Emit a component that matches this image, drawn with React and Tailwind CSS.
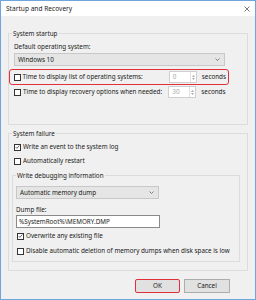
import React from "react";

const Check = ({ checked }) => (
  <div className="w-[7px] h-[7px] shrink-0 border border-[#333] bg-white flex items-center justify-center">
    {checked && (
      <svg width="6" height="6" viewBox="0 0 6 6">
        <path d="M0.8 3.1 L2.3 4.6 L5.2 1.2" fill="none" stroke="#333" strokeWidth="0.9" />
      </svg>
    )}
  </div>
);

const Chevron = () => (
  <svg width="5" height="3" viewBox="0 0 5 3" className="shrink-0">
    <path d="M0.5 0.5 L2.5 2.5 L4.5 0.5" fill="none" stroke="#555" strokeWidth="0.7" />
  </svg>
);

const Spinner = ({ value }) => (
  <div className="w-[28px] h-[12px] border border-[#cfcfcf] bg-white flex items-center shrink-0">
    <span className="flex-1 pl-[3px] text-[#a8a8a8]">{value}</span>
    <div className="w-[6px] h-full border-l border-[#e2e2e2] flex flex-col items-center justify-center gap-[1px]">
      <svg width="3" height="2" viewBox="0 0 3 2">
        <path d="M0 2 L1.5 0 L3 2 Z" fill="#aaa" />
      </svg>
      <svg width="3" height="2" viewBox="0 0 3 2">
        <path d="M0 0 L1.5 2 L3 0 Z" fill="#aaa" />
      </svg>
    </div>
  </div>
);

const Legend = ({ children }) => (
  <span className="block w-fit -mt-[5px] ml-[3px] px-[1px] h-[9px] leading-[9px] bg-[#f0f0f0]">
    {children}
  </span>
);

const Row = ({ checked, label }) => (
  <div className="flex items-center gap-[2px] h-[10px]">
    <Check checked={checked} />
    <span className="leading-[10px]">{label}</span>
  </div>
);

export default function App() {
  return (
    <div className="w-[256px] h-[300px] border border-[#6ea5dc] bg-[#f0f0f0] flex flex-col text-[6.3px] text-[#1a1a1a] font-['Noto_Sans','Open_Sans',sans-serif] overflow-hidden">
      <div className="h-[15px] bg-white flex items-center justify-between pl-[5px] pr-[5px] shrink-0">
        <span className="text-[6.6px]">Startup and Recovery</span>
        <svg width="6" height="6" viewBox="0 0 6 6">
          <path d="M0.5 0.5 L5.5 5.5 M5.5 0.5 L0.5 5.5" stroke="#444" strokeWidth="0.7" />
        </svg>
      </div>

      <div className="flex flex-col px-[7px]">
        {/* System startup */}
        <div className="mt-[17px] h-[92px] border border-[#dcdcdc]">
          <Legend>System startup</Legend>
          <div className="pl-[5px] mt-[4px] h-[9px] leading-[9px]">Default operating system:</div>
          <div className="ml-[5px] mt-[2px] w-[211px] h-[13px] border border-[#c8c8c8] bg-[#e5e5e5] flex items-center justify-between pl-[3px] pr-[4px]">
            <span>Windows 10</span>
            <Chevron />
          </div>
          <div className="mt-[3px] w-[220px] h-[16px] border-[1.5px] border-[#e0303a] rounded-[3px] flex items-center pl-[3.5px]">
            <Row checked={false} label="Time to display list of operating systems:" />
            <div className="flex-1" />
            <Spinner value="0" />
            <span className="ml-[5px] mr-[2px]">seconds</span>
          </div>
          <div className="mt-[1px] w-[220px] h-[12px] flex items-center pl-[5px]">
            <Row checked={false} label="Time to display recovery options when needed:" />
            <div className="flex-1" />
            <Spinner value="30" />
            <span className="ml-[5px] mr-[3.5px]">seconds</span>
          </div>
        </div>

        {/* System failure */}
        <div className="mt-[8px] h-[138px] border border-[#dcdcdc] flex flex-col">
          <Legend>System failure</Legend>
          <div className="pl-[5px] mt-[4px]">
            <Row checked={true} label="Write an event to the system log" />
          </div>
          <div className="pl-[5px] mt-[4px]">
            <Row checked={false} label="Automatically restart" />
          </div>
          <div className="ml-[3px] mt-[9px] w-[228px] h-[87px] border border-[#dcdcdc] flex flex-col">
            <Legend>Write debugging information</Legend>
            <div className="ml-[3px] mt-[6px] w-[143px] h-[13px] border border-[#c8c8c8] bg-[#e5e5e5] flex items-center justify-between pl-[3px] pr-[4px]">
              <span>Automatic memory dump</span>
              <Chevron />
            </div>
            <div className="ml-[3px] mt-[7px] h-[8px] leading-[8px]">Dump file:</div>
            <div className="ml-[3px] mt-[1px] w-[144px] h-[13px] border border-[#8a8a8a] bg-white flex items-center pl-[2px]">
              %SystemRoot%\MEMORY.DMP
            </div>
            <div className="ml-[4px] mt-[3px]">
              <Row checked={true} label="Overwrite any existing file" />
            </div>
            <div className="ml-[4px] mt-[5px]">
              <Row checked={false} label="Disable automatic deletion of memory dumps when disk space is low" />
            </div>
          </div>
        </div>

        {/* Buttons */}
        <div className="mt-[8px] flex justify-end gap-[4px] pr-[18px]">
          <button className="w-[45px] h-[14px] border-[1.5px] border-[#e0303a] rounded-[2px] bg-[#e1e1e1] flex items-center justify-center">
            OK
          </button>
          <button className="w-[46px] h-[14px] border border-[#adadad] bg-[#e1e1e1] flex items-center justify-center">
            Cancel
          </button>
        </div>
      </div>
    </div>
  );
}
